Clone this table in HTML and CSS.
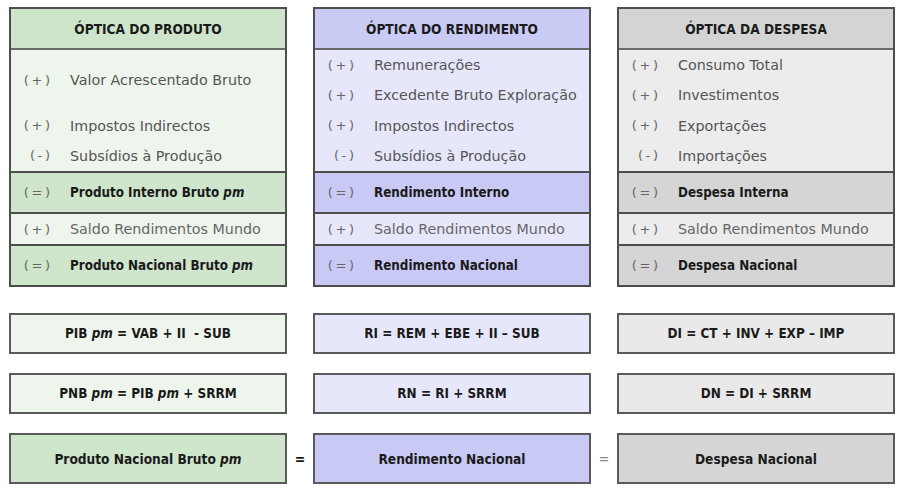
FILE: index.html
```html
<!DOCTYPE html>
<html lang="pt">
<head>
<meta charset="utf-8">
<title>Ópticas</title>
<link rel="stylesheet" href="styles.css">
</head>
<body>
<div class="page">
  <div class="tables">
    <div class="col green">
      <div class="head">ÓPTICA DO PRODUTO</div>
      <div class="body">
        <div class="line span2"><span class="sign">( + )</span><span class="txt">Valor Acrescentado Bruto</span></div>
        <div class="line"><span class="sign">( + )</span><span class="txt">Impostos Indirectos</span></div>
        <div class="line"><span class="sign">( - )</span><span class="txt">Subsídios à Produção</span></div>
      </div>
      <div class="row strong"><span class="sign">( = )</span><span class="txt">Produto Interno Bruto <i>pm</i></span></div>
      <div class="row light"><span class="sign">( + )</span><span class="txt">Saldo Rendimentos Mundo</span></div>
      <div class="row strong"><span class="sign">( = )</span><span class="txt">Produto Nacional Bruto <i>pm</i></span></div>
    </div>
    <div class="col blue">
      <div class="head">ÓPTICA DO RENDIMENTO</div>
      <div class="body">
        <div class="line"><span class="sign">( + )</span><span class="txt">Remunerações</span></div>
        <div class="line"><span class="sign">( + )</span><span class="txt">Excedente Bruto Exploração</span></div>
        <div class="line"><span class="sign">( + )</span><span class="txt">Impostos Indirectos</span></div>
        <div class="line"><span class="sign">( - )</span><span class="txt">Subsídios à Produção</span></div>
      </div>
      <div class="row strong"><span class="sign">( = )</span><span class="txt">Rendimento Interno</span></div>
      <div class="row light"><span class="sign">( + )</span><span class="txt">Saldo Rendimentos Mundo</span></div>
      <div class="row strong"><span class="sign">( = )</span><span class="txt">Rendimento Nacional</span></div>
    </div>
    <div class="col grey">
      <div class="head">ÓPTICA DA DESPESA</div>
      <div class="body">
        <div class="line"><span class="sign">( + )</span><span class="txt">Consumo Total</span></div>
        <div class="line"><span class="sign">( + )</span><span class="txt">Investimentos</span></div>
        <div class="line"><span class="sign">( + )</span><span class="txt">Exportações</span></div>
        <div class="line"><span class="sign">( - )</span><span class="txt">Importações</span></div>
      </div>
      <div class="row strong"><span class="sign">( = )</span><span class="txt">Despesa Interna</span></div>
      <div class="row light"><span class="sign">( + )</span><span class="txt">Saldo Rendimentos Mundo</span></div>
      <div class="row strong"><span class="sign">( = )</span><span class="txt">Despesa Nacional</span></div>
    </div>
  </div>

  <div class="formulas">
    <div class="box green"><span>PIB <i>pm</i> = VAB + II &nbsp;- SUB</span></div>
    <div class="box blue"><span>RI = REM + EBE + II – SUB</span></div>
    <div class="box grey"><span>DI = CT + INV + EXP – IMP</span></div>
  </div>
  <div class="formulas second">
    <div class="box green"><span>PNB <i>pm</i> = PIB <i>pm</i> + SRRM</span></div>
    <div class="box blue"><span>RN = RI + SRRM</span></div>
    <div class="box grey"><span>DN = DI + SRRM</span></div>
  </div>
  <div class="totals">
    <div class="box big green"><span>Produto Nacional Bruto <i>pm</i></span></div>
    <div class="eq">=</div>
    <div class="box big blue"><span>Rendimento Nacional</span></div>
    <div class="eq eq-light">=</div>
    <div class="box big grey"><span>Despesa Nacional</span></div>
  </div>
</div>
</body>
</html>
```

FILE: styles.css
```css
* { box-sizing: border-box; }
html, body { margin: 0; padding: 0; background: #ffffff; }
body {
  font-family: "DejaVu Sans", "Liberation Sans", sans-serif;
  color: #555555;
  width: 900px;
  height: 488px;
  overflow: hidden;
}
.page { padding: 7px 0 0 9px; }

.bold-font,
.head, .row.strong .txt, .box, .eq {
  font-family: "DejaVu Sans Condensed", "Lato", sans-serif;
}

.tables {
  display: grid;
  grid-template-columns: 278px 278px 278px;
  column-gap: 26px;
}
.col {
  border: 2px solid #4d4d4d;
  display: flex;
  flex-direction: column;
  height: 280px;
}
.head {
  height: 39px;
  display: flex;
  align-items: center;
  justify-content: center;
  font-weight: bold;
  font-size: 13.6px;
  color: #1a1a1a;
}
.body {
  height: 123px;
  border-top: 2px solid #6a6a6a;
  display: grid;
  grid-template-rows: repeat(4, 1fr);
}
.line, .row {
  display: flex;
  align-items: center;
  font-size: 14.3px;
}
.line.span2 { grid-row: span 2; }
.row { border-top: 2px solid #4d4d4d; height: 41px; }
.row.light { height: 32px; color: #666666; }
.row.strong .txt { font-weight: bold; color: #1a1a1a; font-size: 13.3px; }
.sign {
  width: 39px;
  text-align: right;
  color: #666666;
  white-space: pre;
  flex: none;
  font-size: 13px;
  word-spacing: -1.5px;
}
.txt { margin-left: 20px; white-space: nowrap; }

.green .head { background: #cfe5cb; }
.green .body, .green .row.light { background: #eef5ec; }
.green .row.strong { background: #cfe5cc; }
.blue .head { background: #cacbf5; }
.blue .body, .blue .row.light { background: #e7e7fb; }
.blue .row.strong { background: #c9c9f5; }
.grey .head { background: #d4d4d4; }
.grey .body, .grey .row.light { background: #ececec; }
.grey .row.strong { background: #d5d5d5; }

.formulas {
  display: grid;
  grid-template-columns: 278px 278px 278px;
  column-gap: 26px;
  margin-top: 26px;
}
.formulas.second { margin-top: 19px; }
.box {
  height: 41px;
  border: 2px solid #5a5a5a;
  display: flex;
  align-items: center;
  justify-content: center;
  font-weight: bold;
  font-size: 13.4px;
  color: #1a1a1a;
  white-space: nowrap;
}
.box.green { background: #eef5ec; }
.box.blue { background: #e7e7fb; }
.box.grey { background: #e9e9e9; }
.box.big { height: 51px; font-size: 13.6px; }
.box.big.green { background: #cfe5cc; }
.box.big.blue { background: #c9c9f5; }
.box.big.grey { background: #d6d6d6; }

.totals {
  display: grid;
  grid-template-columns: 278px 26px 278px 26px 278px;
  margin-top: 19px;
}
.eq {
  display: flex;
  align-items: center;
  justify-content: center;
  font-weight: bold;
  font-size: 14px;
  color: #1a1a1a;
}
.eq-light { color: #888888; font-weight: normal; }
```
